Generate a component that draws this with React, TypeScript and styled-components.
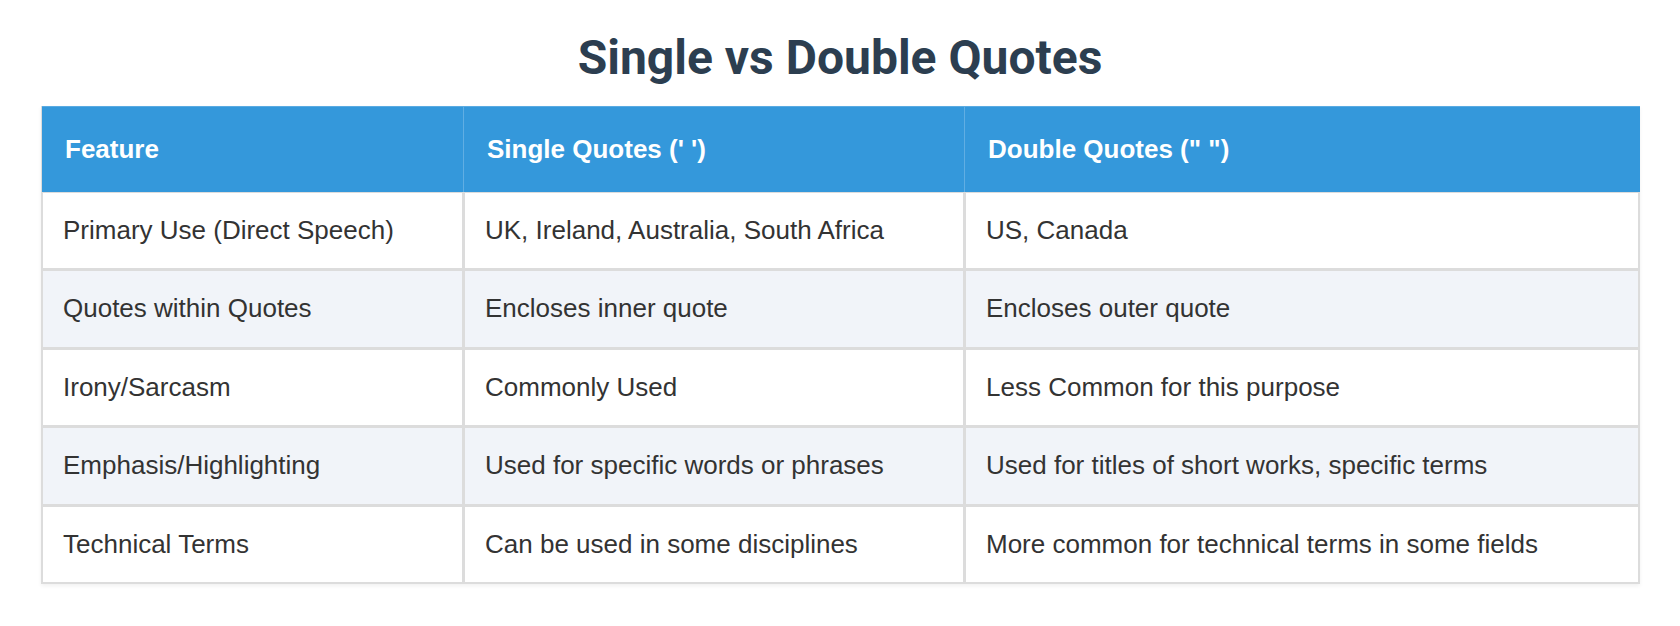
import React from "react";
import styled, { createGlobalStyle } from "styled-components";

const GlobalStyle = createGlobalStyle`
  html, body {
    margin: 0;
    padding: 0;
    background: #ffffff;
  }
  body {
    font-family: "Liberation Sans", Arial, sans-serif;
    color: #333333;
  }
`;

const Page = styled.div`
  display: flex;
  flex-direction: column;
  align-items: stretch;
  padding: 30px 41px 40px;
`;

const Title = styled.h1`
  margin: 0 0 20px;
  text-align: center;
  font-family: Roboto, "Liberation Sans", sans-serif;
  font-weight: 700;
  font-size: 48px;
  line-height: 56px;
  color: #2c3e50;
`;

const Table = styled.table`
  width: 100%;
  table-layout: fixed;
  border-collapse: separate;
  border-spacing: 0;
  border-left: 1px solid #dcdcdc;
  box-shadow: 0 2px 4px rgba(0, 0, 0, 0.06);
`;

const HeadCell = styled.th<{ $last?: boolean }>`
  background: #3498db;
  color: #ffffff;
  text-align: left;
  font-weight: 700;
  font-size: 26px;
  line-height: 37px;
  padding: 24px 24px 24px 23px;
  border-right: ${(p) => (p.$last ? "none" : "1px solid rgba(255, 255, 255, 0.22)")};
  border-top: 1px solid #5aabe2;
`;

const Row = styled.tr<{ $alt: boolean }>`
  background: ${(p) => (p.$alt ? "#f1f4f9" : "#ffffff")};
`;

const Cell = styled.td`
  font-size: 26px;
  line-height: 37.4px;
  padding: 19px 20px;
  color: #333333;
  border-style: solid;
  border-color: #dcdcdc;
  border-width: 1px 2px 2px 1px;
  vertical-align: middle;
`;

const rows: [string, string, string][] = [
  ["Primary Use (Direct Speech)", "UK, Ireland, Australia, South Africa", "US, Canada"],
  ["Quotes within Quotes", "Encloses inner quote", "Encloses outer quote"],
  ["Irony/Sarcasm", "Commonly Used", "Less Common for this purpose"],
  ["Emphasis/Highlighting", "Used for specific words or phrases", "Used for titles of short works, specific terms"],
  ["Technical Terms", "Can be used in some disciplines", "More common for technical terms in some fields"],
];

export default function App() {
  return (
    <>
      <GlobalStyle />
      <Page>
        <Title>Single vs Double Quotes</Title>
        <Table>
          <colgroup>
            <col style={{ width: 422 }} />
            <col style={{ width: 501 }} />
            <col style={{ width: 675 }} />
          </colgroup>
          <thead>
            <tr>
              <HeadCell>Feature</HeadCell>
              <HeadCell>Single Quotes (' ')</HeadCell>
              <HeadCell $last>Double Quotes (" ")</HeadCell>
            </tr>
          </thead>
          <tbody>
            {rows.map((r, i) => (
              <Row key={i} $alt={i % 2 === 1}>
                {r.map((c, j) => (
                  <Cell key={j}>{c}</Cell>
                ))}
              </Row>
            ))}
          </tbody>
        </Table>
      </Page>
    </>
  );
}
